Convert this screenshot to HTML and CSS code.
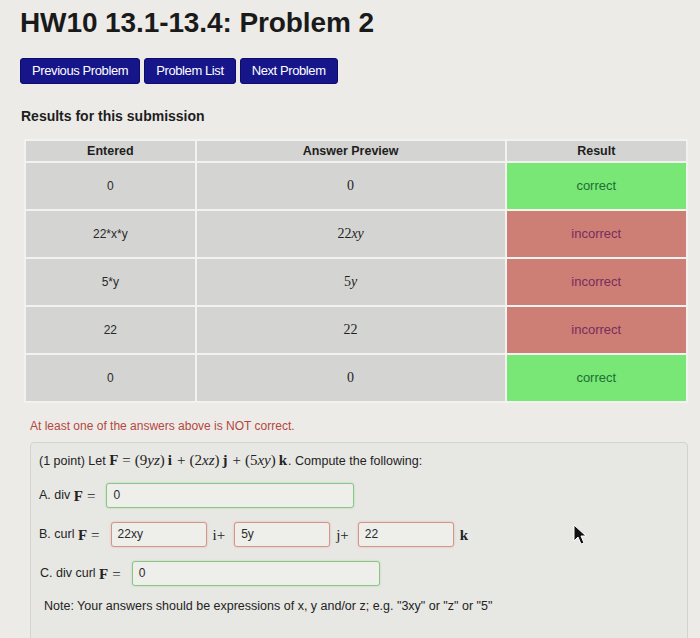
FILE: index.html
```html
<!DOCTYPE html>
<html>
<head>
<meta charset="utf-8">
<link rel="stylesheet" href="styles.css">
</head>
<body>
<div class="page">
  <h1 class="title">HW10 13.1-13.4: Problem 2</h1>
  <div class="nav">
    <a class="btn">Previous Problem</a>
    <a class="btn">Problem List</a>
    <a class="btn">Next Problem</a>
  </div>
  <h2 class="subhead">Results for this submission</h2>
  <table class="results">
    <thead>
      <tr><th class="c1">Entered</th><th class="c2">Answer Preview</th><th class="c3">Result</th></tr>
    </thead>
    <tbody>
      <tr><td>0</td><td class="prev">0</td><td class="ok">correct</td></tr>
      <tr><td>22*x*y</td><td class="prev">22<i>xy</i></td><td class="bad">incorrect</td></tr>
      <tr><td>5*y</td><td class="prev">5<i>y</i></td><td class="bad">incorrect</td></tr>
      <tr><td>22</td><td class="prev">22</td><td class="bad">incorrect</td></tr>
      <tr><td>0</td><td class="prev">0</td><td class="ok">correct</td></tr>
    </tbody>
  </table>
  <p class="warn">At least one of the answers above is NOT correct.</p>
  <div class="problem">
    <p class="line statement">(1 point) Let <span class="m"><b>F</b><span class="op">=</span>(9<i>yz</i>)<b class="u">i</b><span class="op">+</span>(2<i>xz</i>)<b class="u">j</b><span class="op">+</span>(5<i>xy</i>)<b class="u">k</b></span>. Compute the following:</p>
    <div class="line row">A. div <span class="m"><b>F</b><span class="op">=</span></span><span class="inp good w-a">0</span></div>
    <div class="line row">B. curl <span class="m"><b>F</b><span class="op">=</span></span><span class="inp badb w-b">22xy</span><span class="m sep">i+</span><span class="inp badb w-b">5y</span><span class="m sep">j+</span><span class="inp badb w-b">22</span><span class="m sep"><b>k</b></span><svg class="cursor" width="16" height="22" viewBox="0 0 16 22"><path d="M2 1 L2 17 L6 13 L9 20 L12 19 L9 12 L14 12 Z" fill="#111" stroke="#fff" stroke-width="1"/></svg></div>
    <div class="line row rowc">C. div curl <span class="m"><b>F</b><span class="op">=</span></span><span class="inp good w-c">0</span></div>
    <p class="line note">Note: Your answers should be expressions of x, y and/or z; e.g. "3xy" or "z" or "5"</p>
  </div>
</div>
</body>
</html>
```

FILE: styles.css
```css
html, body {
  margin: 0;
  padding: 0;
  background: #ecebe8;
}
body {
  font-family: "Liberation Sans", Arial, sans-serif;
  color: #1c1c1c;
}
.page {
  padding: 9px 12px 0 20px;
  position: relative;
}
.title {
  margin: 0;
  font-size: 28px;
  line-height: 28px;
  font-weight: bold;
  color: #1a1a1a;
  letter-spacing: -0.1px;
}
.nav {
  display: flex;
  gap: 4px;
  margin-top: 21px;
}
.btn {
  display: block;
  background: #16168a;
  color: #fff;
  font-size: 13px;
  letter-spacing: -0.4px;
  line-height: 24px;
  height: 24px;
  padding: 0 11px;
  border-radius: 3px;
  border: 1px solid #0c0c6a;
}
.subhead {
  margin: 23px 0 0 1px;
  font-size: 14px;
  font-weight: bold;
  color: #1e1e1e;
  line-height: 18px;
}
.results {
  margin: 14px 0 0 4px;
  width: 664px;
  border-collapse: collapse;
  border: 1px solid #9a9a98;
  font-size: 12px;
}
.results th, .results td {
  border: 2px solid #f2f2f0;
  background: #d4d4d2;
  text-align: center;
  color: #2a2a2a;
}
.results th {
  height: 18px;
  font-weight: bold;
  font-size: 12.5px;
  color: #1e1e1e;
}
.results td {
  height: 43px;
  padding-bottom: 2px;
}
.c1 { width: 170px; }
.c2 { width: 313px; }
.c3 { width: 181px; }
.results td.prev {
  font-family: "Liberation Serif", "Times New Roman", serif;
  font-size: 14px;
  color: #1f1f1f;
}
.results td.ok {
  background: #78e776;
  color: #1d6e33;
  font-size: 13px;
}
.results td.bad {
  background: #cd7f75;
  color: #7b2c5e;
  font-size: 13px;
}
.warn {
  margin: 16px 0 0 10px;
  font-size: 12px;
  color: #b4473f;
}
.problem {
  margin: 9px 0 0 10px;
  width: 658px;
  height: 200px;
  background: #e7e7e3;
  border: 1px solid #d3d3cf;
  border-radius: 4px;
  padding: 9px 8px;
  box-sizing: border-box;
  font-size: 12.5px;
  color: #232323;
}
.line {
  margin: 0;
}
.m {
  font-family: "Liberation Serif", "Times New Roman", serif;
  font-size: 15px;
}
.m i { font-style: italic; }
.u { margin: 0 1px 0 3px; }
.op { margin: 0 4px; }
.row {
  margin-top: 13px;
  height: 26px;
  line-height: 26px;
  position: relative;
}
.row > * { vertical-align: middle; }
.inp {
  display: inline-block;
  box-sizing: border-box;
  height: 25px;
  line-height: 23px;
  padding: 0 6px;
  margin-left: 7px;
  background: #eeeeeb;
  border-radius: 3px;
  font-size: 12px;
  color: #2a2a2a;
}
.good {
  border: 1px solid #8cc488;
  box-shadow: 0 0 2px #a9d6a5;
}
.badb {
  border: 1px solid #d4968c;
  box-shadow: 0 0 2px #e0b2aa;
}
.w-a { width: 248px; }
.w-b { width: 96px; }
.sep + .w-b { margin-left: 0; }
.w-c { width: 248px; }
.sep {
  display: inline-block;
  margin: 0 9px 0 6px;
}
.rowc { padding-left: 1px; }
.cursor {
  position: absolute;
  left: 533px;
  top: 3px;
}
.note {
  margin-top: 13px;
  margin-left: 5px;
}
```
